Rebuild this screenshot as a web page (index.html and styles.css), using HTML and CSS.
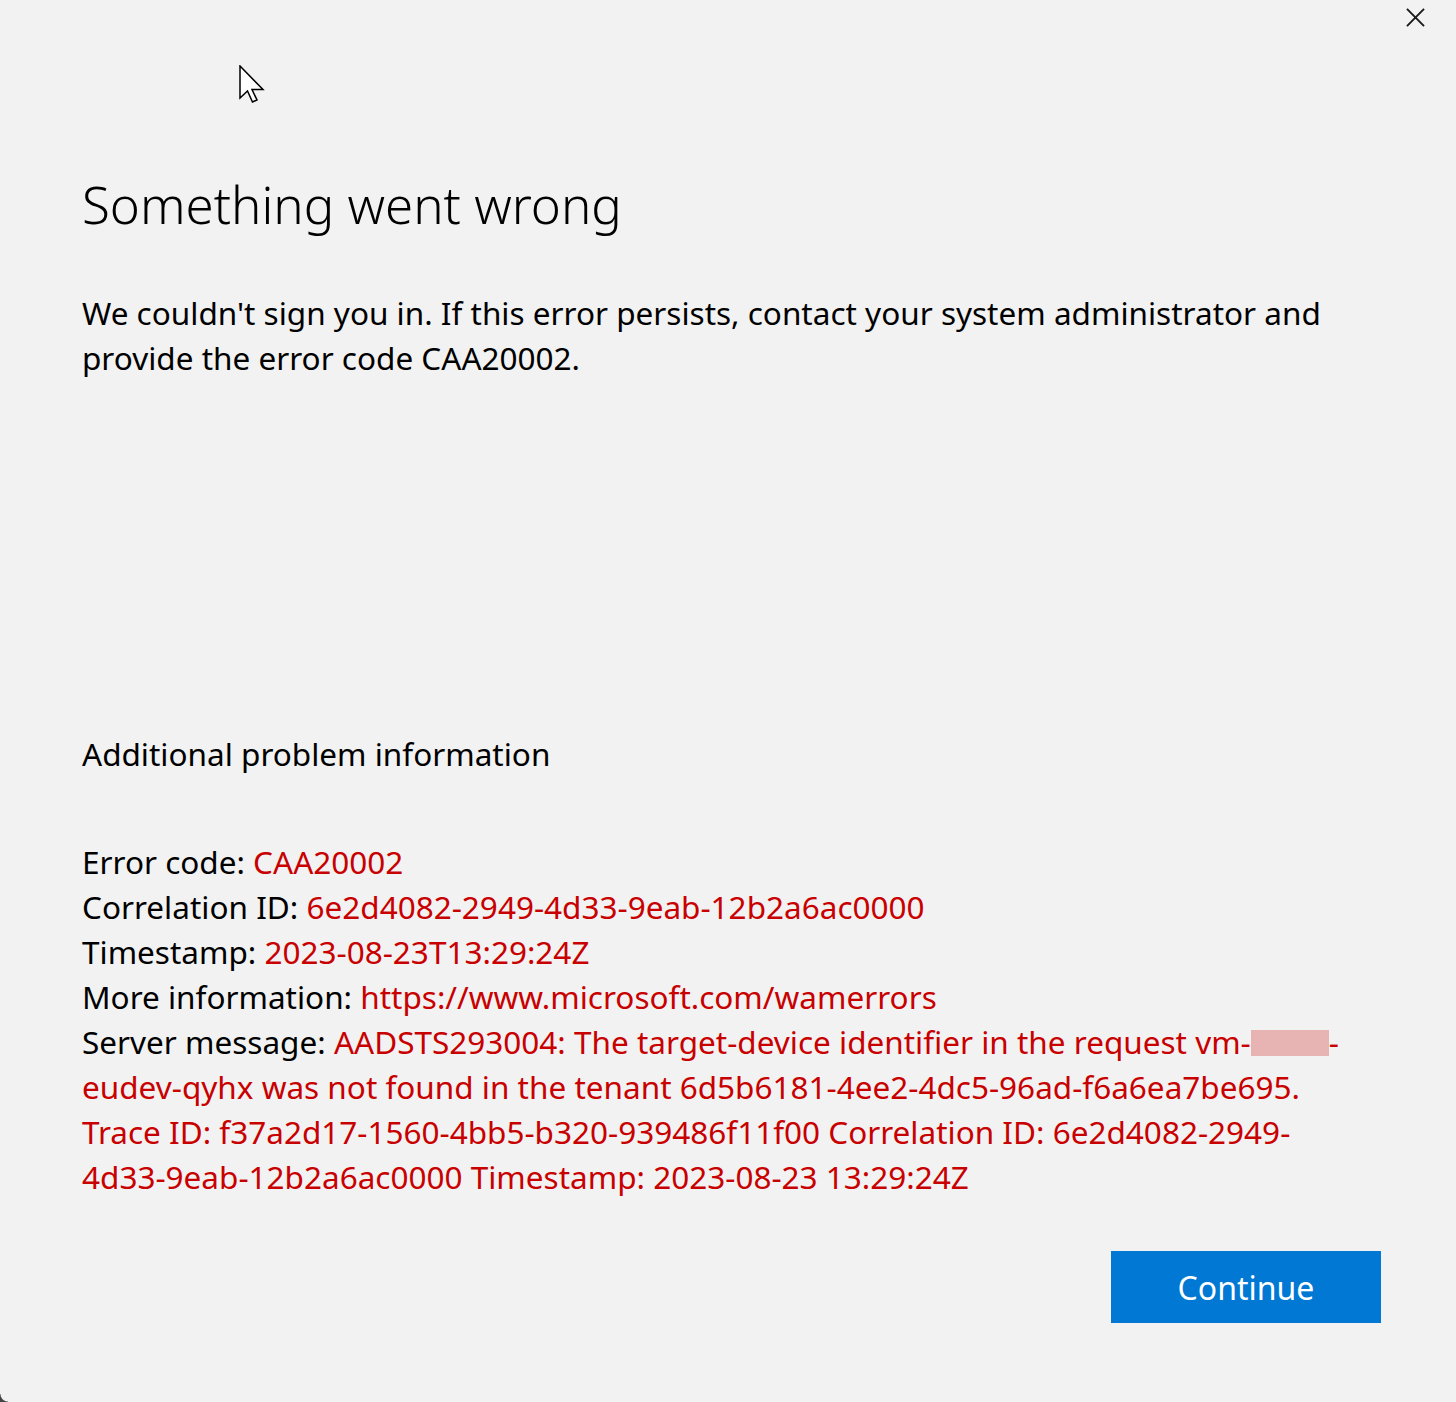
FILE: index.html
```html
<!DOCTYPE html>
<html lang="en">
<head>
<meta charset="utf-8">
<title>Something went wrong</title>
<link rel="stylesheet" href="styles.css">
</head>
<body>
<div class="window">
  <div class="titlebar">
    <button class="close" aria-label="Close">
      <svg width="20" height="20" viewBox="0 0 20 20"><path d="M1 1 L19 19 M19 1 L1 19" stroke="#1a1a1a" stroke-width="2" fill="none"/></svg>
    </button>
  </div>
  <svg class="cursor" width="28" height="40" viewBox="0 0 28 40"><path d="M1 1 L1 33 L8.5 26 L13.5 37 L18 35 L13 24.5 L24 24.5 Z" fill="#fff" stroke="#000" stroke-width="1.5" stroke-linejoin="miter"/></svg>
  <main class="content">
    <h1 class="title">Something went wrong</h1>
    <p class="lead">We couldn't sign you in. If this error persists, contact your system administrator and<br>provide the error code CAA20002.</p>
    <h2 class="subhead">Additional problem information</h2>
    <div class="details">
      <div class="row">Error code: <span class="val">CAA20002</span></div>
      <div class="row">Correlation ID: <span class="val">6e2d4082-2949-4d33-9eab-12b2a6ac0000</span></div>
      <div class="row">Timestamp: <span class="val">2023-08-23T13:29:24Z</span></div>
      <div class="row">More information: <span class="val">https://www.microsoft.com/wamerrors</span></div>
      <div class="row">Server message: <span class="val">AADSTS293004: The target-device identifier in the request vm-<span class="redact" aria-hidden="true"></span>-<br>eudev-qyhx was not found in the tenant 6d5b6181-4ee2-4dc5-96ad-f6a6ea7be695.<br>Trace ID: f37a2d17-1560-4bb5-b320-939486f11f00 Correlation ID: 6e2d4082-2949-<br>4d33-9eab-12b2a6ac0000 Timestamp: 2023-08-23 13:29:24Z</span></div>
    </div>
    <div class="actions">
      <button class="btn">Continue</button>
    </div>
  </main>
  <div class="corner"></div>
</div>
</body>
</html>
```
FILE: styles.css
```css
* { box-sizing: border-box; }
html, body { margin: 0; padding: 0; background: #f2f2f2; }
body { font-family: "Noto Sans", "Open Sans", sans-serif; color: #000; }
.window {
  position: relative;
  width: 1456px;
  height: 1402px;
  background: #f2f2f2;
  overflow: hidden;
}
.titlebar {
  display: flex;
  justify-content: flex-end;
  height: 40px;
}
.close {
  width: 62px;
  height: 34px;
  border: 0;
  background: transparent;
  display: flex;
  align-items: center;
  justify-content: center;
  padding: 0 0 0 16px;
  margin-right: 18px;
}
.close svg { width: 19px; height: 19px; }
.cursor { position: absolute; left: 239px; top: 65px; }
.content {
  padding: 0 75px 0 82px;
  display: flex;
  flex-direction: column;
}
.title {
  margin: 132px 0 0;
  font-size: 51px;
  line-height: 64px;
  font-weight: 300;
  letter-spacing: 0;
}
.lead {
  margin: 54px 0 0;
  font-size: 31.5px;
  line-height: 45px;
  font-weight: 400;
  white-space: nowrap;
}
.subhead {
  margin: 351px 0 0;
  font-size: 31.5px;
  line-height: 45px;
  font-weight: 400;
}
.details {
  margin-top: 63px;
  font-size: 31.5px;
  line-height: 45px;
  white-space: nowrap;
}
.val { color: #c80000; }
.redact {
  display: inline-block;
  background: #e7b3b3;
  width: 78px;
  height: 26px;
  vertical-align: -2px;
}
.actions {
  display: flex;
  justify-content: flex-end;
  margin-top: 52px;
}
.btn {
  width: 270px;
  height: 72px;
  background: #0078d4;
  color: #fff;
  border: 0;
  font-family: inherit;
  font-size: 32px;
  margin-right: 0;
}
.corner {
  position: absolute;
  left: 0;
  bottom: 0;
  width: 8px;
  height: 8px;
  background: radial-gradient(circle at 100% 0, transparent 7px, #444 8px);
}
```
